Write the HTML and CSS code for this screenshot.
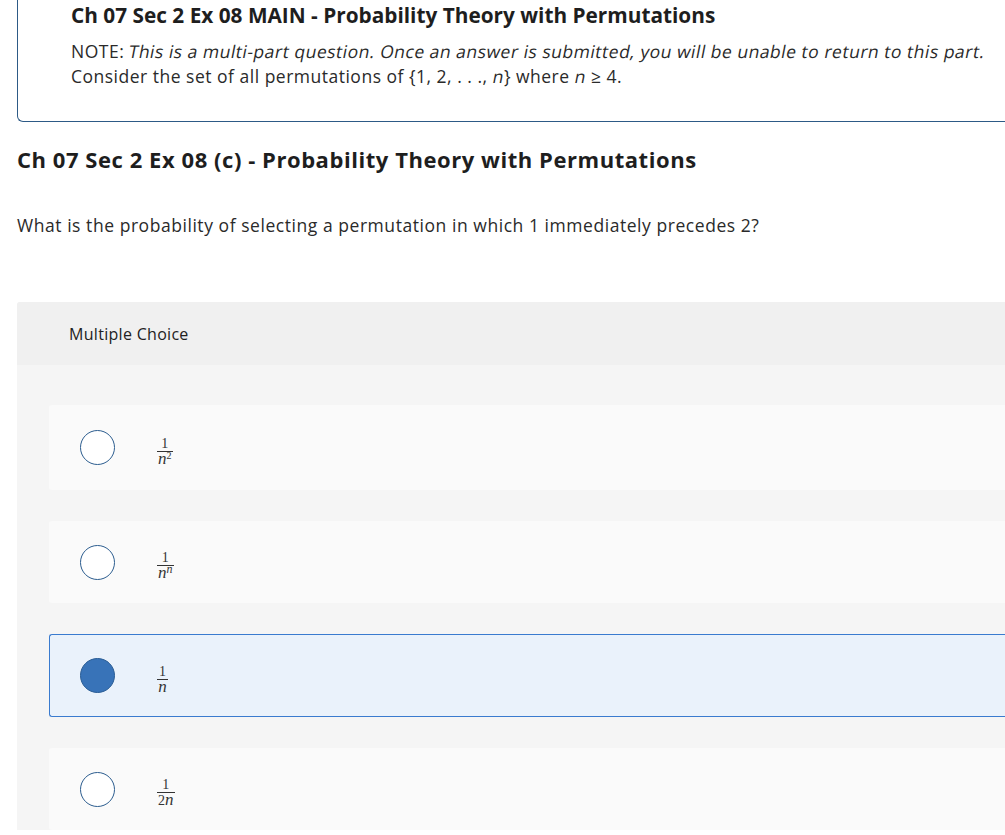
FILE: index.html
```html
<!DOCTYPE html>
<html lang="en">
<head>
<meta charset="utf-8">
<title>Ch 07 Sec 2 Ex 08 (c)</title>
<link rel="stylesheet" href="styles.css">
</head>
<body>
<div class="page">
  <section class="intro">
    <h1 class="intro-title">Ch 07 Sec 2 Ex 08 MAIN - Probability Theory with Permutations</h1>
    <p class="intro-text">NOTE: <em class="obl">This is a multi-part question. Once an answer is submitted, you will be unable to return to this part.</em><br>Consider the set of all permutations of {1, 2, . . ., <em class="obl">n</em>} where <em class="obl">n</em> ≥ 4.</p>
  </section>

  <h2 class="part-title">Ch 07 Sec 2 Ex 08 (c) - Probability Theory with Permutations</h2>
  <p class="question">What is the probability of selecting a permutation in which 1 immediately precedes 2?</p>

  <section class="mc">
    <div class="mc-head">Multiple Choice</div>
    <div class="mc-body">
      <div class="option">
        <span class="radio"></span>
        <span class="frac"><span class="num">1</span><span class="den"><i>n</i><sup>2</sup></span></span>
      </div>
      <div class="option">
        <span class="radio"></span>
        <span class="frac"><span class="num">1</span><span class="den"><i>n</i><sup><i>n</i></sup></span></span>
      </div>
      <div class="option selected">
        <span class="radio"></span>
        <span class="frac"><span class="num">1</span><span class="den"><i>n</i></span></span>
      </div>
      <div class="option">
        <span class="radio"></span>
        <span class="frac"><span class="num">1</span><span class="den">2<i>n</i></span></span>
      </div>
    </div>
  </section>
</div>
</body>
</html>
```
FILE: styles.css
```css
html, body {
  margin: 0;
  padding: 0;
  background: #ffffff;
  overflow: hidden;
}
body {
  font-family: "Open Sans", Lato, "Liberation Sans", sans-serif;
  color: #222222;
  width: 1005px;
  height: 835px;
}
.page {
  padding-left: 17px;
  margin-right: -12px;
}
.intro {
  border-left: 1.5px solid #2d5a86;
  border-bottom: 1.5px solid #2d5a86;
  border-bottom-left-radius: 6px;
  padding: 1px 0 0 53px;
  box-sizing: border-box;
  height: 122px;
}
.intro-title {
  margin: 0;
  font-size: 20.8px;
  font-weight: 700;
  line-height: 28px;
  color: #1e1e1e;
}
.intro-text {
  margin: 10px 0 0;
  font-size: 17.5px;
  letter-spacing: 0.5px;
  line-height: 25px;
  color: #2a2a2a;
}
.obl {
  display: inline-block;
  font-style: normal;
  transform: skewX(-11deg);
}
.part-title {
  margin: 22px 0 0;
  font-size: 22px;
  letter-spacing: 0.55px;
  font-weight: 700;
  line-height: 30px;
  color: #1e1e1e;
}
.question {
  margin: 39px 0 0;
  font-size: 17.5px;
  letter-spacing: 0.55px;
  line-height: 24px;
  color: #2a2a2a;
}
.mc {
  margin-top: 65px;
  background: #f5f5f5;
  border-radius: 3px 0 0 0;
}
.mc-head {
  background: #f0f0f0;
  height: 63px;
  display: flex;
  align-items: center;
  padding-left: 52px;
  font-size: 16px;
  letter-spacing: 0.3px;
  color: #222;
  border-radius: 3px 0 0 0;
}
.mc-body {
  padding: 40px 0 0 32px;
  display: flex;
  flex-direction: column;
  gap: 31px;
}
.option {
  display: flex;
  align-items: center;
  height: 82px;
  box-sizing: border-box;
  background: #fafafa;
  border: 1px solid transparent;
  border-right: none;
  border-radius: 3px 0 0 3px;
  padding-left: 30px;
}
.option:first-child {
  height: 85px;
}
.option.selected {
  height: 83px;
  background: #eaf2fb;
  border-color: #3a7bcf;
}
.radio {
  width: 35px;
  height: 35px;
  box-sizing: border-box;
  border: 1.5px solid #2c5d8f;
  border-radius: 50%;
  background: #ffffff;
  flex: none;
}
.selected .radio {
  background: #3873b8;
  border-color: #2a5d95;
}
.frac {
  margin-left: 42px;
  display: inline-flex;
  flex-direction: column;
  align-items: center;
  font-family: "Liberation Serif", "DejaVu Serif", serif;
  font-size: 14px;
  line-height: 12px;
  color: #333;
  margin-top: 8px;
}
.num {
  padding: 0 2px 1px;
  border-bottom: 1px solid #333;
  min-width: 6px;
  text-align: center;
  align-self: stretch;
}
.den {
  padding: 1px 1px 0;
}
.den i {
  font-size: 17px;
}
.den sup {
  font-size: 10px;
  line-height: 0;
  vertical-align: 5px;
}
.den sup i {
  font-size: 12px;
}
```
